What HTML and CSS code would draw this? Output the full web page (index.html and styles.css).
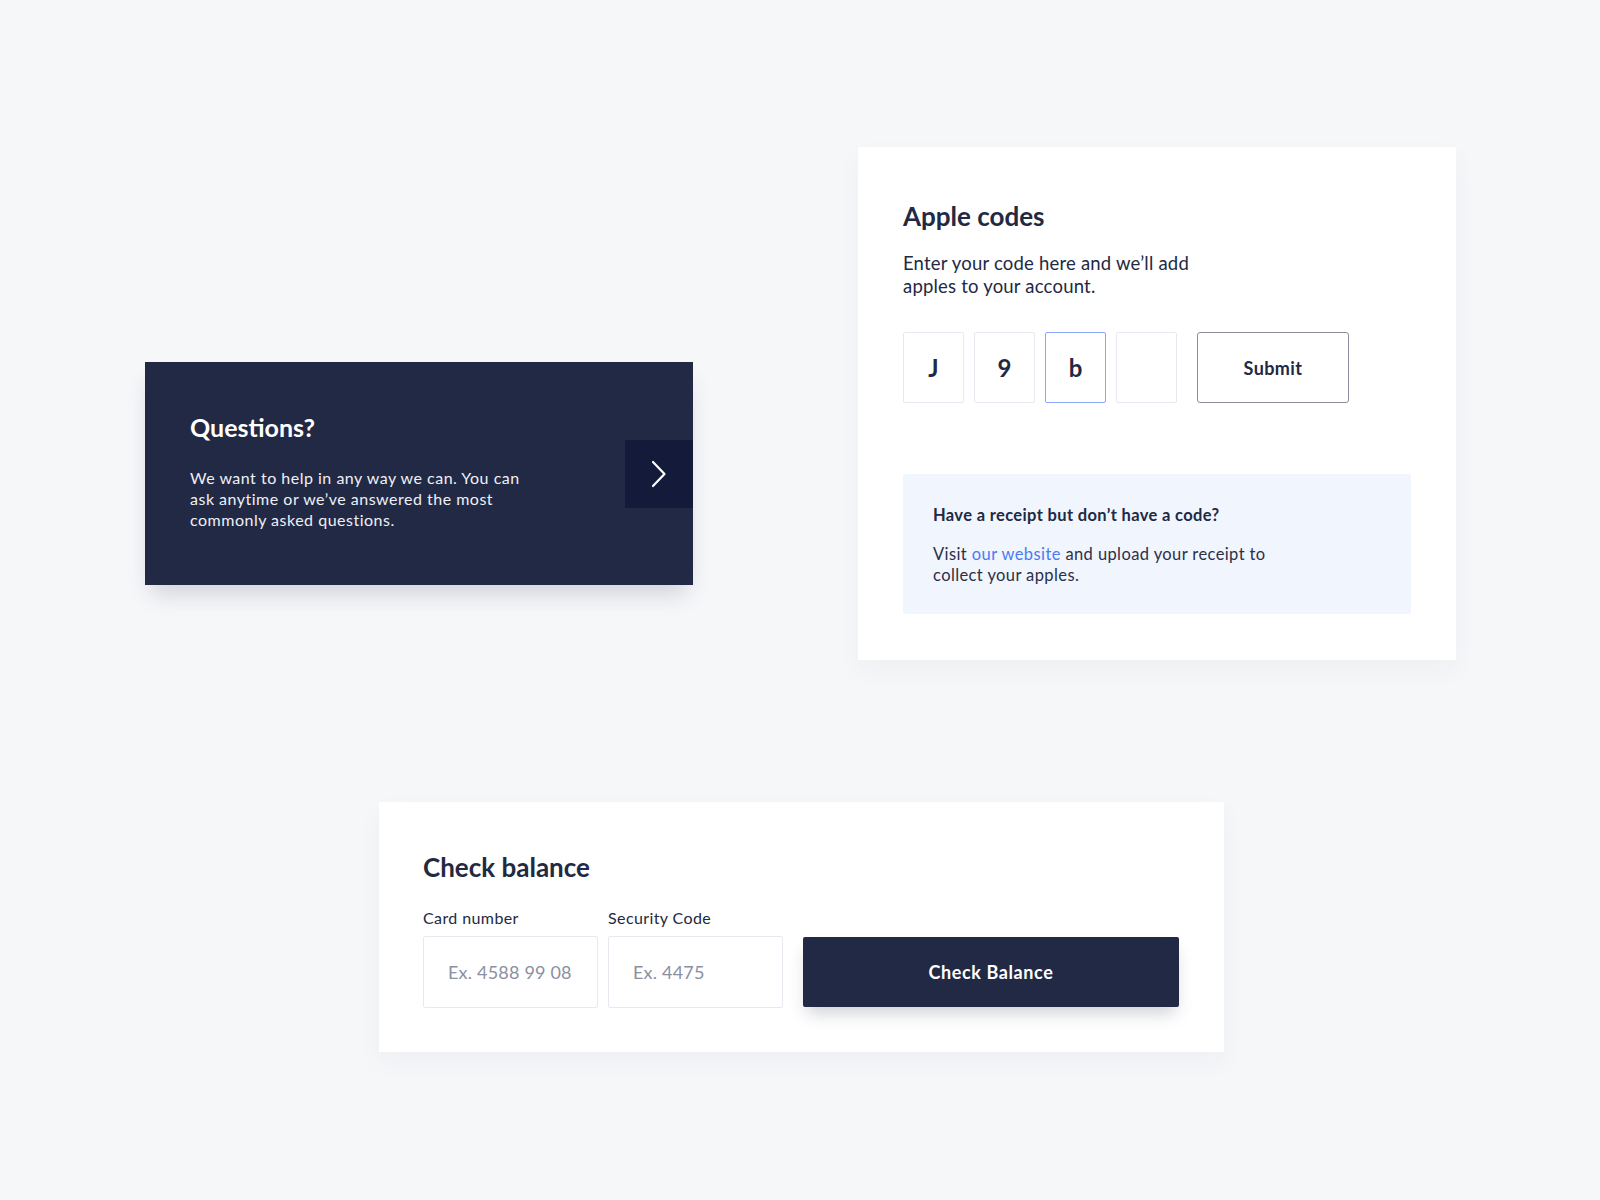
FILE: index.html
```html
<!DOCTYPE html>
<html lang="en">
<head>
<meta charset="utf-8">
<title>Cards</title>
<link rel="stylesheet" href="styles.css">
</head>
<body>
<main class="page">
  <div class="top-row">
    <section class="questions">
      <div class="questions-text">
        <h2 class="questions-title">Questions?</h2>
        <p class="questions-body">We want to help in any way we can. You can ask anytime or we’ve answered the most commonly asked questions.</p>
      </div>
      <a class="questions-arrow" href="#" aria-label="Go">
        <svg width="16" height="28" viewBox="0 0 16 28" fill="none"><path d="M2 2 L13.5 14 L2 26" stroke="#ffffff" stroke-width="2.2" stroke-linecap="round" stroke-linejoin="round"/></svg>
      </a>
    </section>

    <section class="apple">
      <h2 class="card-title">Apple codes</h2>
      <p class="apple-intro">Enter your code here and we’ll add apples to your account.</p>
      <div class="code-row">
        <div class="code-box">J</div>
        <div class="code-box">9</div>
        <div class="code-box code-box-active">b</div>
        <div class="code-box"></div>
        <button class="submit-btn">Submit</button>
      </div>
      <div class="receipt">
        <h3 class="receipt-title">Have a receipt but don’t have a code?</h3>
        <p class="receipt-body">Visit <a class="link" href="#">our website</a> and upload your receipt to collect your apples.</p>
      </div>
    </section>
  </div>

  <section class="balance">
    <h2 class="card-title">Check balance</h2>
    <div class="balance-row">
      <label class="field">
        <span class="field-label">Card number</span>
        <span class="field-input">Ex. 4588 99 08</span>
      </label>
      <label class="field">
        <span class="field-label">Security Code</span>
        <span class="field-input">Ex. 4475</span>
      </label>
      <button class="balance-btn">Check Balance</button>
    </div>
  </section>
</main>
</body>
</html>
```

FILE: styles.css
```css
* { box-sizing: border-box; }

html, body {
  margin: 0;
  padding: 0;
  background: #f6f7f9;
  font-family: "Lato", "Open Sans", sans-serif;
  color: #222943;
}

.page {
  width: 1600px;
  height: 1200px;
  padding: 147px 144px 0 145px;
}

.top-row {
  display: flex;
  justify-content: space-between;
  align-items: flex-start;
}

/* Questions card */
.questions {
  margin-top: 215px;
  width: 548px;
  height: 223px;
  background: #222944;
  display: flex;
  align-items: center;
  justify-content: space-between;
  box-shadow: 0 14px 22px -6px rgba(34, 41, 68, 0.18);
}

.questions-text {
  padding: 0 0 0 45px;
  margin-top: -5px;
}

.questions-title {
  margin: 0 0 25px;
  font-size: 25px;
  font-weight: 700;
  line-height: 30px;
  color: #ffffff;
}

.questions-body {
  margin: 0;
  width: 342px;
  font-size: 16px;
  line-height: 21px;
  color: #eef0f6;
  letter-spacing: 0.5px;
}

.questions-arrow {
  width: 68px;
  height: 68px;
  background: #141b3a;
  display: flex;
  align-items: center;
  justify-content: center;
}

/* Apple codes card */
.apple {
  width: 598px;
  background: #ffffff;
  padding: 53px 45px 46px;
  box-shadow: 0 10px 24px rgba(34, 41, 68, 0.04);
}

.card-title {
  margin: 0;
  font-size: 26px;
  font-weight: 700;
  line-height: 32px;
  color: #222943;
}

.apple-intro {
  margin: 20px 0 0;
  width: 310px;
  font-size: 18.5px;
  line-height: 23px;
  color: #222943;
  letter-spacing: 0.2px;
}

.code-row {
  display: flex;
  align-items: center;
  gap: 10px;
  margin-top: 34px;
}

.code-box {
  width: 61px;
  height: 71px;
  border: 1px solid #e7e9f1;
  border-radius: 2px;
  display: flex;
  align-items: center;
  justify-content: center;
  font-size: 24px;
  font-weight: 700;
  color: #222943;
}

.code-box-active {
  border-color: #8aa8fb;
}

.submit-btn {
  margin-left: 10px;
  width: 152px;
  height: 71px;
  border: 1.5px solid #8a8d9b;
  border-radius: 3px;
  background: #ffffff;
  font-family: inherit;
  font-size: 18px;
  font-weight: 700;
  letter-spacing: 0.4px;
  color: #222943;
}

.receipt {
  margin-top: 71px;
  width: 508px;
  height: 140px;
  background: #f1f5fd;
  border-radius: 2px;
  padding: 30px 30px;
}

.receipt-title {
  margin: 0;
  font-size: 16.5px;
  font-weight: 700;
  line-height: 22px;
  letter-spacing: 0.35px;
  color: #222943;
}

.receipt-body {
  margin: 18px 0 0;
  width: 350px;
  font-size: 16.5px;
  line-height: 21px;
  color: #2a3049;
  letter-spacing: 0.4px;
}

.link {
  color: #4a7bf5;
  text-decoration: none;
}

/* Balance card */
.balance {
  margin: 142px 0 0 234px;
  width: 845px;
  height: 250px;
  background: #ffffff;
  padding: 49px 45px 0 44px;
  box-shadow: 0 10px 24px rgba(34, 41, 68, 0.04);
}

.balance-row {
  display: flex;
  align-items: flex-end;
  gap: 10px;
  margin-top: 25px;
}

.field {
  display: flex;
  flex-direction: column;
  gap: 9px;
}

.field-label {
  font-size: 16px;
  line-height: 19px;
  letter-spacing: 0.4px;
  color: #222943;
}

.field-input {
  width: 175px;
  height: 72px;
  border: 1px solid #e7e9f1;
  border-radius: 2px;
  padding-left: 24px;
  display: flex;
  align-items: center;
  font-size: 18px;
  letter-spacing: 0.2px;
  color: #8b90a2;
}

.balance-btn {
  margin-left: 10px;
  margin-bottom: 1px;
  width: 376px;
  height: 70px;
  border: none;
  border-radius: 2px;
  background: #222944;
  font-family: inherit;
  font-size: 18px;
  font-weight: 700;
  letter-spacing: 0.6px;
  color: #ffffff;
  box-shadow: 0 10px 16px -4px rgba(34, 41, 68, 0.22);
}
```
